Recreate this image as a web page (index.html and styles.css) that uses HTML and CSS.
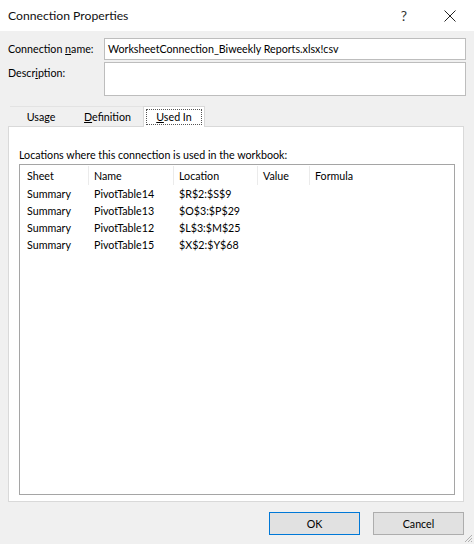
FILE: index.html
```html
<!DOCTYPE html>
<html>
<head>
<meta charset="utf-8">
<link rel="stylesheet" href="styles.css">
</head>
<body>
<div class="dialog">
  <div class="titlebar">
    <span class="title">Connection Properties</span>
    <span class="help">?</span>
    <svg class="close" width="12" height="12" viewBox="0 0 12 12"><path d="M0.5 0.5 L11.5 11.5 M11.5 0.5 L0.5 11.5" stroke="#222" stroke-width="1" fill="none"/></svg>
  </div>
  <div class="body">
    <div class="field">
      <label class="lbl">Connection <u>n</u>ame:</label>
      <div class="input">WorksheetConnection_Biweekly Reports.xlsx!csv</div>
    </div>
    <div class="field desc">
      <label class="lbl">Descr<u>i</u>ption:</label>
      <div class="textarea"></div>
    </div>
    <div class="tabs">
      <div class="tab usage">Usa<u>g</u>e</div>
      <div class="tab def"><u>D</u>efinition</div>
      <div class="tab active"><span class="focus"><u>U</u>sed In</span></div>
    </div>
    <div class="panel">
      <div class="caption">Locations where this connection is used in the workbook:</div>
      <div class="list">
        <div class="row head">
          <div class="c c1">Sheet</div>
          <div class="c c2">Name</div>
          <div class="c c3">Location</div>
          <div class="c c4">Value</div>
          <div class="c c5">Formula</div>
        </div>
        <div class="row"><div class="c c1">Summary</div><div class="c c2">PivotTable14</div><div class="c c3">$R$2:$S$9</div><div class="c c4"></div><div class="c c5"></div></div>
        <div class="row"><div class="c c1">Summary</div><div class="c c2">PivotTable13</div><div class="c c3">$O$3:$P$29</div><div class="c c4"></div><div class="c c5"></div></div>
        <div class="row"><div class="c c1">Summary</div><div class="c c2">PivotTable12</div><div class="c c3">$L$3:$M$25</div><div class="c c4"></div><div class="c c5"></div></div>
        <div class="row"><div class="c c1">Summary</div><div class="c c2">PivotTable15</div><div class="c c3">$X$2:$Y$68</div><div class="c c4"></div><div class="c c5"></div></div>
      </div>
    </div>
    <div class="buttons">
      <div class="btn ok">OK</div>
      <div class="btn cancel">Cancel</div>
    </div>
  </div>
  <svg class="grip" width="10" height="10" viewBox="0 0 10 10"><path d="M9 2 L2 9 M9 5 L5 9 M9 8 L8 9" stroke="#b0b0b0" stroke-width="1" fill="none"/></svg>
</div>
</body>
</html>
```

FILE: styles.css
```css
html, body {
  margin: 0;
  padding: 0;
}
body {
  width: 474px;
  height: 544px;
  background: #f0f0f0;
  font-family: Lato, "Noto Sans", sans-serif;
  font-size: 10.7px;
  color: #000;
  overflow: hidden;
}
.dialog {
  position: relative;
  width: 474px;
  height: 544px;
}
.titlebar {
  height: 31px;
  background: #fff;
  display: flex;
  align-items: center;
  padding-left: 8px;
}
.title {
  font-size: 12.2px;
  flex: 1;
  color: #111;
}
.help {
  font-size: 14px;
  margin-right: 37px;
  color: #333;
}
.close {
  margin-right: 18px;
}
.body {
  padding: 7px 0 0 8px;
}
.field {
  display: flex;
  height: 22px;
}
.field.desc {
  margin-top: 2px;
  height: 34px;
}
.lbl {
  width: 96px;
  line-height: 21px;
  white-space: nowrap;
}
.input {
  height: 20px;
  background: #fff;
  border: 1px solid #bdbdbd;
  line-height: 20px;
  padding-left: 3px;
  width: 357px;
  white-space: nowrap;
}
.textarea {
  width: 360px;
  height: 32px;
  background: #fff;
  border: 1px solid #bdbdbd;
}
.tabs {
  display: flex;
  margin-top: 9px;
  height: 21px;
  align-items: flex-end;
  padding-left: 2px;
}
.tab {
  height: 19px;
  line-height: 20px;
  text-align: center;
  border-top: 1px solid #e3e3e3;
  white-space: nowrap;
}
.tab.usage {
  width: 62px;
}
.tab.def {
  width: 71px;
}
.tab.active {
  width: 60px;
  height: 20px;
  background: #fff;
  border: 1px solid #d9d9d9;
  border-bottom: none;
  display: flex;
  align-items: center;
  justify-content: center;
  position: relative;
  top: 1px;
}
.focus {
  border: 1px dotted #555;
  padding: 0 9px;
  line-height: 14px;
  height: 14px;
  margin-top: -1px;
}
.panel {
  background: #fff;
  border: 1px solid #d9d9d9;
  padding: 0 0 0 10px;
  box-sizing: border-box;
  width: 456px;
  height: 376px;
}
.caption {
  margin-top: 19px;
  height: 17px;
  line-height: 17px;
  white-space: nowrap;
}
.list {
  width: 436px;
  height: 331px;
  border: 1px solid #a5a5a5;
  box-sizing: border-box;
  margin-top: 1px;
}
.row {
  display: grid;
  grid-template-columns: 68px 85px 84px 52px 1fr;
  height: 17px;
  line-height: 17px;
}
.row.head {
  height: 19px;
  line-height: 19px;
  margin-top: 1px;
  margin-bottom: 0;
}
.c {
  padding-left: 5px;
  white-space: nowrap;
  overflow: hidden;
}
.c1 {
  padding-left: 7px;
}
.head .c2, .head .c3, .head .c4, .head .c5 {
  border-left: 1px solid #ebebeb;
}
.row:not(.head) .c2, .row:not(.head) .c3, .row:not(.head) .c4, .row:not(.head) .c5 {
  border-left: 1px solid transparent;
}
.buttons {
  display: flex;
  justify-content: flex-end;
  gap: 13px;
  margin-top: 10px;
  padding-right: 10px;
}
.btn {
  width: 89px;
  height: 21px;
  line-height: 21px;
  text-align: center;
  background: #e1e1e1;
  border: 1px solid #adadad;
}
.btn.ok {
  border-color: #0078d7;
}
.grip {
  position: absolute;
  right: 1px;
  bottom: 1px;
}
```
